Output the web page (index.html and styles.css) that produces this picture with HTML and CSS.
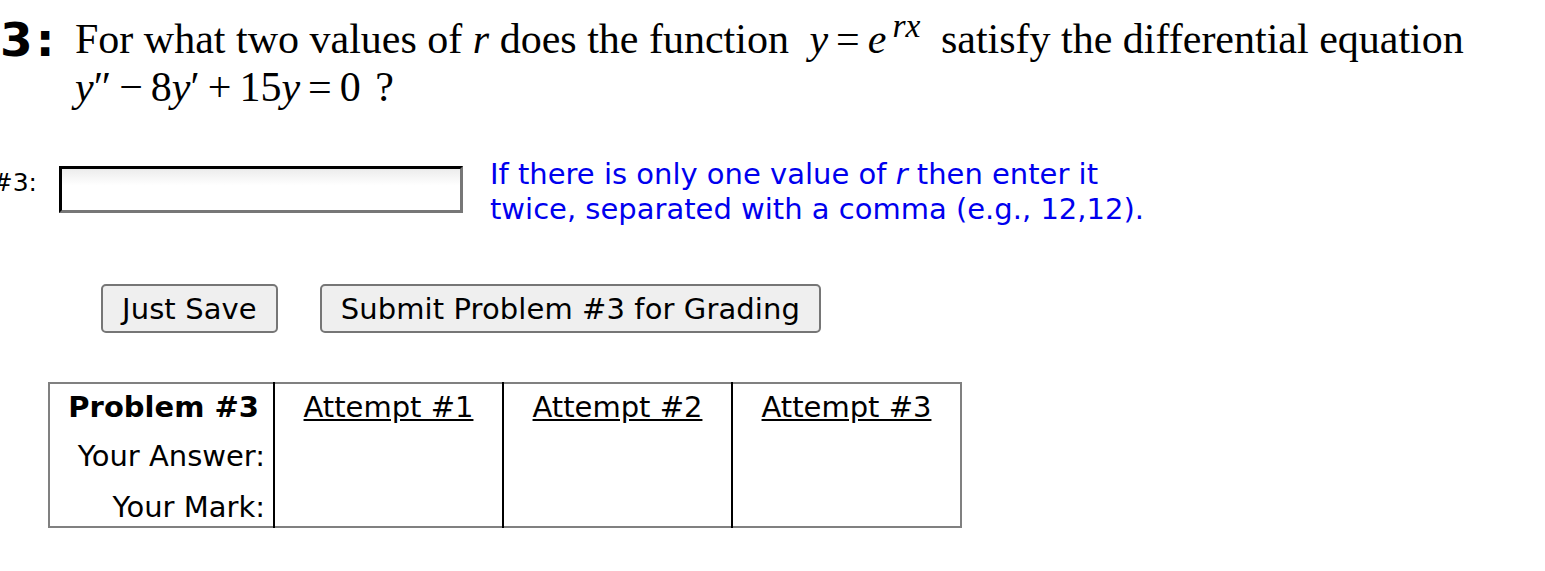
FILE: index.html
```html
<!DOCTYPE html>
<html lang="en">
<head>
    <meta charset="UTF-8">
    <title>Problem 3</title>
    <link rel="stylesheet" href="styles.css">
</head>
<body>
    <div class="page">
        <div class="problem">
            <div class="problem-num">3:</div>
            <div class="problem-text">
                For what two values of <i>r</i> does the function
                <span class="math"><i>y</i><span class="op">=</span><i>e</i><sup><i>rx</i></sup></span>
                satisfy the differential equation<br>
                <span class="math line2"><i>y</i>&Prime;<span class="op">&minus;</span>8<i>y</i>&prime;<span class="op">+</span>15<i>y</i><span class="op">=</span>0</span> ?
            </div>
        </div>

        <div class="answer-row">
            <label class="answer-label" for="ans">#3:</label>
            <input type="text" id="ans" class="answer-input">
            <div class="hint">If there is only one value of <i>r</i> then enter it<br>twice, separated with a comma (e.g., 12,12).</div>
        </div>

        <div class="btn-row">
            <button class="btn">Just Save</button>
            <button class="btn">Submit Problem #3 for Grading</button>
        </div>

        <table class="attempts">
            <colgroup>
                <col class="col-label">
                <col class="col-attempt">
                <col class="col-attempt">
                <col class="col-attempt">
            </colgroup>
            <tr class="head-row">
                <th class="row-head">Problem #3</th>
                <td class="attempt"><a href="#">Attempt #1</a></td>
                <td class="attempt"><a href="#">Attempt #2</a></td>
                <td class="attempt"><a href="#">Attempt #3</a></td>
            </tr>
            <tr class="answer-line">
                <td class="row-label">Your Answer:</td>
                <td></td><td></td><td></td>
            </tr>
            <tr class="mark-line">
                <td class="row-label">Your Mark:</td>
                <td></td><td></td><td></td>
            </tr>
        </table>
    </div>
</body>
</html>
```

FILE: styles.css
```css
body {
    margin: 0;
    background: #fff;
    font-family: "DejaVu Sans", Verdana, sans-serif;
    color: #000;
    overflow: hidden;
}

.page {
    margin-left: -22px;
}

.problem {
    display: flex;
    padding-top: 15px;
}

.problem-num {
    width: 97px;
    font-weight: bold;
    font-size: 47px;
    letter-spacing: 3px;
    line-height: 50px;
    padding-left: 22px;
    box-sizing: border-box;
}

.problem-text {
    font-family: "Liberation Serif", "Times New Roman", serif;
    font-size: 42px;
    line-height: 48px;
}

.math {
    margin: 0 10px 0 10px;
    white-space: nowrap;
}

.math.line2 {
    margin: 0 4px 0 0;
}

.op {
    margin: 0 8px;
}

.math sup {
    font-size: 80%;
    vertical-align: 16px;
    line-height: 0;
    margin-left: 6px;
}

.answer-row {
    display: flex;
    align-items: flex-start;
    margin-top: 42px;
}

.answer-label {
    font-size: 25px;
    width: 81px;
    padding-right: 22px;
    box-sizing: border-box;
    text-align: right;
    padding-top: 15px;
    white-space: nowrap;
}

.answer-input {
    width: 404px;
    height: 47px;
    box-sizing: border-box;
    border: 3px inset #777;
    border-top-color: #222;
    border-left-color: #222;
    background: linear-gradient(#ececec, #fff 40%);
    margin-top: 13px;
}

.hint {
    color: #0000ee;
    font-size: 29px;
    line-height: 35px;
    margin-left: 27px;
    margin-top: 4px;
}

.btn-row {
    display: flex;
    gap: 42px;
    margin-top: 57px;
    margin-left: 123px;
}

.btn {
    font-family: "DejaVu Sans", Verdana, sans-serif;
    font-size: 29px;
    letter-spacing: 0.1px;
    height: 49px;
    padding: 0 19px;
    background: #efefef;
    border: 2px solid #767676;
    border-radius: 5px;
    color: #000;
}

.attempts {
    table-layout: fixed;
    width: 912px;
    border-collapse: collapse;
    border: 2px solid #808080;
    margin-top: 49px;
    margin-left: 70px;
    font-size: 29px;
}

.col-label {
    width: 225px;
}

.col-attempt {
    width: 229px;
}

.attempts th,
.attempts td {
    padding: 0 8px;
    height: 46px;
    border-left: 2px solid #000;
    white-space: nowrap;
}

.attempts .answer-line td {
    height: 51px;
}

.attempts .mark-line td {
    padding-top: 6px;
    height: 39px;
}

.attempts tr > :first-child {
    border-left: none;
    text-align: right;
}

.attempts th.row-head {
    padding-right: 14px;
}

.attempts td.attempt {
    text-align: center;
}

.attempts a {
    color: #000;
}
```
